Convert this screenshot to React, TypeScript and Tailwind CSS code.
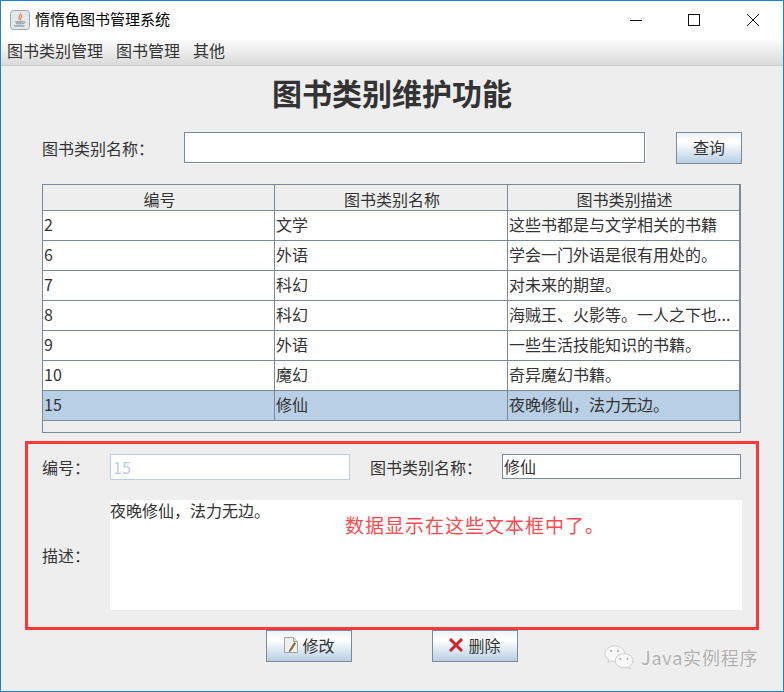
const rows = [
  ["2", "文学", "这些书都是与文学相关的书籍"],
  ["6", "外语", "学会一门外语是很有用处的。"],
  ["7", "科幻", "对未来的期望。"],
  ["8", "科幻", "海贼王、火影等。一人之下也..."],
  ["9", "外语", "一些生活技能知识的书籍。"],
  ["10", "魔幻", "奇异魔幻书籍。"],
  ["15", "修仙", "夜晚修仙，法力无边。"],
];

function JavaIcon() {
  return (
    <svg width="20" height="20" viewBox="0 0 20 20">
      <rect x="0.5" y="0.5" width="19" height="19" rx="3" fill="#e4e7ec" stroke="#9aa5b3" />
      <path d="M10.500 3c1 2-2.500 3-1.500 5.500.4 1 1.200 1.300 1.200 1.300-.6-1.600 2.600-2.600 1.400-4.800" fill="none" stroke="#e8945a" strokeWidth="1.400" />
      <path d="M5.500 11h8v1.500c0 1.200-1 2-2 2h-4c-1 0-2-.8-2-2z" fill="#a3adba" />
      <path d="M13.500 11.500c2 0 2 2-.5 2.200" fill="none" stroke="#8a97a8" />
      <path d="M4 16h10.500" stroke="#8593a5" strokeWidth="1.200" />
    </svg>
  );
}

function EditIcon() {
  return (
    <svg width="16" height="18" viewBox="0 0 16 18">
      <path d="M1.500 1.500h9l4 4v11h-13z" fill="#f1f1ec" stroke="#a3a39c" />
      <path d="M10.500 1.500v4h4" fill="#dcdcd6" stroke="#a3a39c" />
      <path d="M11.500 6.500l-4.500 7-1 2 2-1 4.500-7z" fill="#8a6a3c" stroke="#5e4a2c" strokeWidth="0.6" />
    </svg>
  );
}

function DeleteIcon() {
  return (
    <svg width="14" height="14" viewBox="0 0 14 14">
      <path d="M2 2l10 10M12 2L2 12" stroke="#d3222a" strokeWidth="3" strokeLinecap="square" />
    </svg>
  );
}

function WechatIcon() {
  return (
    <svg width="30" height="26" viewBox="0 0 32 28">
      <path d="M11.500 1C5.700 1 1 4.700 1 9.300c0 2.700 1.600 5 4 6.500L4 19l3.600-1.900c1.200.4 2.500.6 3.900.6 5.800 0 10.500-3.800 10.500-8.400S17.300 1 11.500 1z" fill="#fafafa" stroke="#c9c9c9" />
      <path d="M21 9.500c-5 0-9 3.300-9 7.400s4 7.400 9 7.400c1.100 0 2.200-.2 3.200-.5L28 26l-1-3.200c2.500-1.400 4-3.500 4-5.900 0-4.100-4-7.400-10-7.400z" fill="#fafafa" stroke="#c9c9c9" />
      <circle cx="7.500" cy="6.500" r="1" fill="#9a9a9a" />
      <circle cx="15" cy="6.500" r="1" fill="#9a9a9a" />
      <circle cx="17.500" cy="15" r="1" fill="#9a9a9a" />
      <circle cx="25" cy="15" r="1" fill="#9a9a9a" />
    </svg>
  );
}

function MetalButton({ icon, label, w, gap }: { icon?: React.ReactNode; label: string; w: string; gap?: string }) {
  return (
    <button className={`${w} ${gap ?? "gap-[3px]"} flex h-8 items-center justify-center border border-[#7a8a99] bg-gradient-to-b from-[#eef3f8] via-white via-30% to-[#b8cfe5] pb-[2px] text-base text-[#333]`}>
      {icon}
      {label}
    </button>
  );
}

export default function App() {
  return (
    <div className="relative h-[692px] w-[784px] overflow-hidden border border-[#1883d7] bg-[#eeeeee] font-['Noto_Sans_CJK_SC',sans-serif] text-base text-[#333]">
      <div className="flex h-[37px] items-center bg-white pl-[9px] text-black">
        <JavaIcon />
        <span className="ml-[5px] pb-[1px] text-[15px]">惰惰龟图书管理系统</span>
        <div className="ml-auto flex items-center">
          <svg width="14" height="14" viewBox="0 0 14 14" className="mr-[44px]">
            <path d="M1 7.500h12" stroke="#111" />
          </svg>
          <svg width="14" height="14" viewBox="0 0 14 14" className="mr-[45px]">
            <rect x="1.500" y="1.500" width="11" height="11" fill="none" stroke="#111" />
          </svg>
          <svg width="14" height="14" viewBox="0 0 14 14" className="mr-[23px]">
            <path d="M1 1l12 12M13 1L1 13" stroke="#111" />
          </svg>
        </div>
      </div>

      <div className="flex h-7 items-center gap-[13px] border-b border-[#cfcfcf] bg-gradient-to-b from-white to-[#dadada] pb-[3px] pl-[6px]">
        <span>图书类别管理</span>
        <span>图书管理</span>
        <span>其他</span>
      </div>

      <div className="flex h-14 items-center justify-center pb-1 text-[30px] font-bold">图书类别维护功能</div>

      <div className="mt-[10px] flex h-8 items-center pl-[41px]">
        <span className="w-[142px] pb-[1px]">图书类别名称：</span>
        <input readOnly className="h-[31px] w-[461px] self-start border border-[#7a8a99] bg-white shadow-[1px_1px_0_#fff]" />
        <div className="ml-[31px]">
          <MetalButton label="查询" w="w-[66px]" />
        </div>
      </div>

      <div className="mt-5 ml-[41px] h-[249px] w-[699px] border border-[#7a8a99]">
        <div className="grid grid-cols-[232px_233px_232px]">
          {["编号", "图书类别名称", "图书类别描述"].map((h) => (
            <div key={h} className="flex h-[26px] items-center justify-center border-r border-b border-[#7a8a99] pt-[2px] pl-[2px]">
              {h}
            </div>
          ))}
          {rows.map((r) =>
            r.map((c, i) => (
              <div
                key={r[0] + i}
                className={`flex h-[30px] items-center overflow-hidden border-r border-b border-[#7a8a99] pb-[3px] pl-px whitespace-nowrap ${r[0] === "15" ? "bg-[#b8cfe5]" : "bg-white"}`}
              >
                {c}
              </div>
            ))
          )}
        </div>
      </div>

      <div className="mt-2 ml-6 h-[189px] w-[734px] border-[3px] border-[#fb3b3b] pt-[10px] pl-[14px]">
        <div className="flex h-[26px] items-center">
          <span className="w-[68px] pb-[1px]">编号：</span>
          <input readOnly value="15" className="h-[26px] w-[240px] border border-[#b8cfe5] bg-white pb-[1px] pl-[2px] text-[#b8cfe5]" />
          <span className="ml-5 w-[132px] pb-[1px]">图书类别名称：</span>
          <input readOnly value="修仙" className="h-[25px] w-[239px] self-start border border-[#7a8a99] bg-white pb-[1px] pl-px text-[#333]" />
        </div>
        <div className="mt-5 flex h-[110px] items-center">
          <span className="w-[68px]">描述：</span>
          <textarea
            readOnly
            value="夜晚修仙，法力无边。"
            className="h-[110px] w-[632px] resize-none bg-white leading-5 text-[#333] outline-none"
          />
        </div>
      </div>

      <div className="absolute top-[510px] left-[344px] text-[19px] tracking-[1px] text-[#fb4a50]">数据显示在这些文本框中了。</div>

      <div className="flex justify-center gap-20">
        <MetalButton icon={<EditIcon />} label="修改" w="w-[86px]" />
        <MetalButton icon={<DeleteIcon />} label="删除" w="w-[86px]" gap="gap-[5px]" />
      </div>

      <div className="absolute top-[643px] left-[603px] flex items-center gap-[7px]">
        <WechatIcon />
        <span className="pb-[1px] text-[18px] tracking-[0.8px] text-[#b0b0b0] [text-shadow:0_0_2px_#fff]">Java实例程序</span>
      </div>
    </div>
  );
}
